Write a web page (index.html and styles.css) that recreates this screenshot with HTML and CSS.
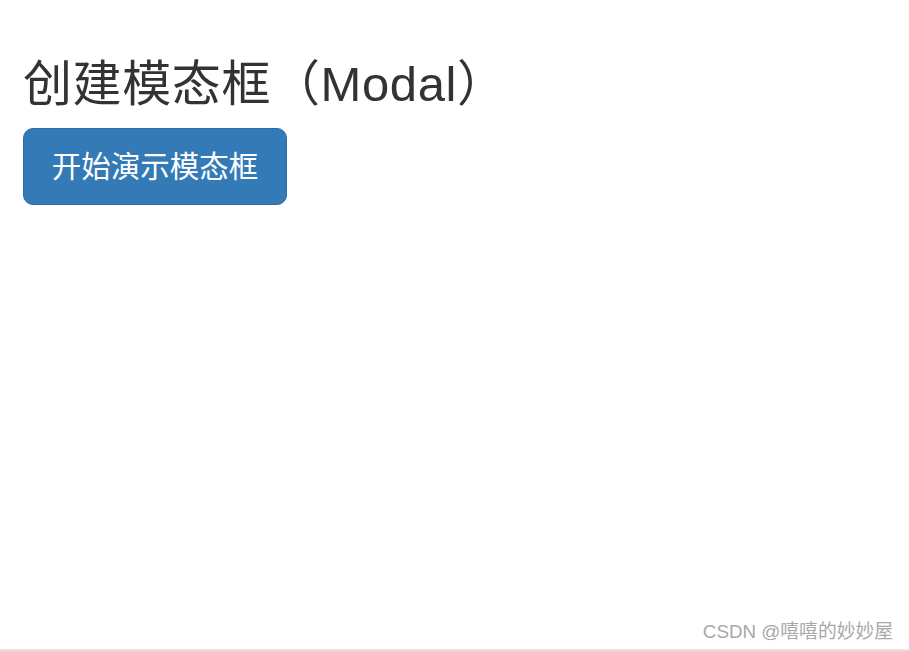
FILE: index.html
```html
<!DOCTYPE html>
<html lang="zh-CN">
<head>
  <meta charset="UTF-8">
  <title>创建模态框（Modal）</title>
  <link rel="stylesheet" href="styles.css">
</head>
<body>

  <div class="page">
    <div class="container">
      <h2>创建模态框（Modal）</h2>
      <button class="btn btn-primary btn-lg">开始演示模态框</button>
    </div>

    <div class="watermark">CSDN @嘻嘻的妙妙屋</div>
  </div>

</body>
</html>
```

FILE: styles.css
```css
html, body { margin: 0; padding: 0; height: 100%; }
body { background: #fff; color: #333; font-family: "Liberation Sans", "Noto Sans CJK SC", sans-serif; }
.page { height: 651px; box-sizing: border-box; display: flex; flex-direction: column; border-bottom: 2px solid #e3e3e3; }
.container { padding: 24px 23px 0; }
h2 { font-size: 49px; font-weight: 400; line-height: 1.1; letter-spacing: 0.6px; margin: 34px 0 16px; color: #333; }
.btn { display: block; font-family: inherit; font-size: 29.5px; line-height: 1.333; padding: 16px 26px; border: 1.5px solid transparent; border-radius: 10px; cursor: pointer; }
.btn-primary { background: #337ab7; border-color: #2e6da4; color: #fff; }
.btn-lg { width: 264px; height: 77px; }
.watermark { margin-top: auto; align-self: flex-end; padding: 0 16px 6px 0; font-size: 18.8px; color: #a8a8a8; }
```
